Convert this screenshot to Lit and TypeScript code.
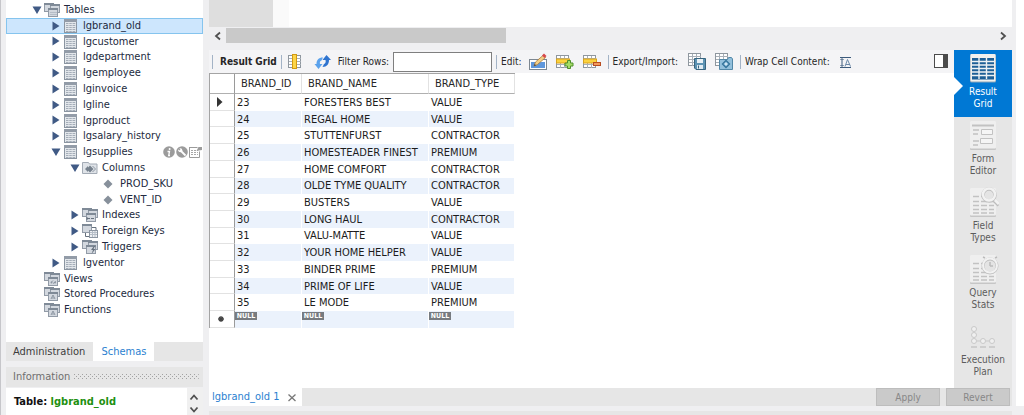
import { LitElement, html, css, svg, nothing, TemplateResult } from "lit";
import { customElement, state } from "lit/decorators.js";
import { classMap } from "lit/directives/class-map.js";

type Kind = "stack" | "views" | "procs" | "table" | "columns" | "column" | "indexes" | "keys" | "triggers";

interface Node {
  label: string;
  level: number;
  kind: Kind;
  open?: boolean;
}

const NODES: Node[] = [
  { label: "Tables", level: 0, kind: "stack", open: true },
  { label: "lgbrand_old", level: 1, kind: "table", open: false },
  { label: "lgcustomer", level: 1, kind: "table", open: false },
  { label: "lgdepartment", level: 1, kind: "table", open: false },
  { label: "lgemployee", level: 1, kind: "table", open: false },
  { label: "lginvoice", level: 1, kind: "table", open: false },
  { label: "lgline", level: 1, kind: "table", open: false },
  { label: "lgproduct", level: 1, kind: "table", open: false },
  { label: "lgsalary_history", level: 1, kind: "table", open: false },
  { label: "lgsupplies", level: 1, kind: "table", open: true },
  { label: "Columns", level: 2, kind: "columns", open: true },
  { label: "PROD_SKU", level: 3, kind: "column" },
  { label: "VENT_ID", level: 3, kind: "column" },
  { label: "Indexes", level: 2, kind: "indexes", open: false },
  { label: "Foreign Keys", level: 2, kind: "keys", open: false },
  { label: "Triggers", level: 2, kind: "triggers", open: false },
  { label: "lgventor", level: 1, kind: "table", open: false },
  { label: "Views", level: 0, kind: "views" },
  { label: "Stored Procedures", level: 0, kind: "procs" },
  { label: "Functions", level: 0, kind: "procs" },
];

const ROWS: [number, string, string][] = [
  [23, "FORESTERS BEST", "VALUE"],
  [24, "REGAL HOME", "VALUE"],
  [25, "STUTTENFURST", "CONTRACTOR"],
  [26, "HOMESTEADER FINEST", "PREMIUM"],
  [27, "HOME COMFORT", "CONTRACTOR"],
  [28, "OLDE TYME QUALITY", "CONTRACTOR"],
  [29, "BUSTERS", "VALUE"],
  [30, "LONG HAUL", "CONTRACTOR"],
  [31, "VALU-MATTE", "VALUE"],
  [32, "YOUR HOME HELPER", "VALUE"],
  [33, "BINDER PRIME", "PREMIUM"],
  [34, "PRIME OF LIFE", "VALUE"],
  [35, "LE MODE", "PREMIUM"],
];

/* ---- tree icons, 16 x 14 ---- */
const sheet = (x: number, y: number) => svg`
  <rect x=${x + 0.5} y=${y + 0.5} width="9" height="8" fill="#d3d8df" stroke="#929ba7"/>
  <rect x=${x} y=${y} width="10" height="2" fill="#7f8a97"/>`;

const badge: Record<string, unknown> = {
  stack: svg`<path d="M6 9.500h7M6 11.500h7" stroke="#b5bdc7"/>`,
  views: svg`<path d="M7.500 10l1.500-1.500M9 11.500l3-2" stroke="#8b95a1"/><circle cx="7.500" cy="10.500" r="1" fill="#8b95a1"/><circle cx="11" cy="10.500" r="1" fill="#8b95a1"/>`,
  procs: svg`<path d="M7 12l2-4 2 4M8 11h2" stroke="#8b95a1" fill="none"/>`,
  indexes: svg`<path d="M5 9v3M5 10.500h8" stroke="#66717e" stroke-dasharray="3 1"/>`,
  triggers: svg`<path d="M12 6l-3 4h2l-1.500 4 4-5h-2l1.500-3z" fill="#66717e"/>`,
};

function treeIcon(kind: Kind): TemplateResult {
  let body: unknown;
  if (kind === "table") {
    body = svg`<rect x="1.500" y=".5" width="12" height="13" fill="#e3e7eb" stroke="#8b95a1"/>
      <rect x="1" y="0" width="13" height="3" fill="#939ca8"/>
      <path d="M3 4.500h10M3 6.500h10M3 8.500h10M3 10.500h10M3 12.500h10" stroke="#a4adb8" stroke-dasharray="2.500 .75"/>`;
  } else if (kind === "columns") {
    body = svg`<path d="M.5 12.500v-11h6l1 1.500h7.500v9.500z" fill="#dfe3e8" stroke="#a3abb5"/>
      <path d="M3 8l3-3v6zM8 4.500l3.500 3.500-3.500 3.500-3.500-3.500z" fill="#76818d"/><path d="M10.500 5l3 3-3 3" stroke="#8b95a1" fill="none"/>`;
  } else if (kind === "column") {
    body = svg`<path d="M8 2.500l4.500 4.500-4.500 4.500-4.500-4.500z" fill="#87909b"/>`;
  } else if (kind === "keys") {
    body = svg`${sheet(0, 0)}<path d="M10 3.500h4v3M3.500 9v3.500h4" stroke="#66717e" fill="none"/>
      <rect x="7.500" y="6.500" width="8" height="7" fill="#eef0f3" stroke="#8b95a1"/><path d="M8 8.500h7M8 10.500h7M10.500 7v6M13 7v6" stroke="#b5bdc7"/>`;
  } else {
    body = svg`${sheet(0, 0)}${sheet(6, 1)}${sheet(4, 5)}${badge[kind]}`;
  }
  return html`<svg class="ticon" width="16" height="14" viewBox="0 0 16 14" aria-hidden="true">${body}</svg>`;
}

/* ---- toolbar icons ---- */
const miniGrid = (x: number, y: number) => svg`
  <rect x=${x + 0.5} y=${y + 0.5} width="12" height="12" fill="#fff" stroke="#8f979f"/>
  <path d="M${x + 1} ${y + 3.5}h12M${x + 1} ${y + 6.5}h12M${x + 1} ${y + 9.5}h12M${x + 4.5} ${y + 1}v12M${x + 8.5} ${y + 1}v12" stroke="#a9b0b8"/>`;

const tool = {
  columns: svg`${miniGrid(2, 2)}<rect x="6.500" y="1.500" width="4" height="14" fill="#fcd54a" stroke="#d39a12"/>`,
  refresh: svg`<path d="M4.500 16l-4-5h2c0-4 2-6.500 6.500-6.500l-1.500 3c-1.500.5-2 1.500-1.500 3.500h2.500z" fill="#5ba2ec"/><path d="M12.500 2l4.500 5h-2c0 4-2 7-6.500 7l1.500-3c1.500-.5 2-2 1.500-4h-3z" fill="#2f74cf"/>`,
  edit: svg`<rect x=".5" y="6.500" width="17" height="10" fill="#fff" stroke="#7d8791"/><path d="M2 9h14v6h-14z" fill="#5f97dc"/>
    <path d="M5 13l1.500-4 8-7 2 2.500-8 7z" fill="#f4cf86" stroke="#a87b3c" stroke-width=".8"/><path d="M13 2.500l2-2 2.500 2.500-2 2z" fill="#d8484c"/><path d="M5 13l.8-2 1.200 1.200z" fill="#333"/>`,
  add: svg`${miniGrid(0, 2)}<rect x=".5" y="6" width="13" height="4" fill="#fbd33f" stroke="#d9a21c"/>
    <path d="M11.500 7.500h3v2.500h2.500v3h-2.500v2.500h-3v-2.500h-2.500v-3h2.500z" fill="#a5dd68" stroke="#4f8f2b"/>`,
  remove: svg`${miniGrid(0, 2)}<rect x=".5" y="6" width="13" height="4" fill="#fbd33f" stroke="#d9a21c"/>
    <rect x="10.500" y="9.500" width="7" height="3" fill="#f39b5e" stroke="#b84d21"/>`,
  save: svg`${miniGrid(0, 0)}<path d="M6.500 5.500h11v11h-9.500l-1.500-1.500z" fill="#5d93b3" stroke="#37647f"/>
    <rect x="9" y="6" width="6" height="4" fill="#e9f1f6"/><rect x="9" y="12" width="6" height="4" fill="#dfeaf1"/><path d="M10.500 12.500v3" stroke="#37647f"/>`,
  load: svg`${miniGrid(0, 0)}<path d="M4.500 16.500v-10h8l1-2h3l1 1.500v10.500z" fill="#93c0dc" stroke="#5288a8"/>
    <path d="M11 7.500l3.500 3.500-3.500 3.500-3.500-3.500z" fill="none" stroke="#33739b" stroke-width="1.300"/><path d="M11 9.500l1.500 1.500-1.500 1.500-1.500-1.500z" fill="#d8ebf6"/>`,
  wrap: svg`<path d="M3 4.500h11M3 14.500h11M5 6v7M3.500 7l1.500-1.500 1.500 1.500M3.500 12l1.500 1.500 1.500-1.500" stroke="#3d5b7c" fill="none"/>
    <path d="M8 13.500l2.500-7 3 7M9 11.500h4" stroke="#6c89a8" fill="none"/>`,
  panel: svg`<rect x="2.500" y="1.500" width="13" height="13" fill="#fff" stroke="#4c4c4c"/><rect x="11" y="1" width="5" height="14" fill="#4c4c4c"/>`,
};

function toolIcon(name: keyof typeof tool): TemplateResult {
  return html`<svg width="18" height="18" viewBox="0 0 18 18" aria-hidden="true">${tool[name]}</svg>`;
}

/* ---- side view icons, 32 x 30 ---- */
const page = svg`<rect x="3" y="1.500" width="26" height="28.500" rx="1" fill="#c6c6c6"/><rect x="3" y="1" width="26" height="27.500" rx="1" fill="#efefef"/>`;
const bars = svg`<path d="M6 9.500h6M14 9.500h6M6 14.500h6M14 14.500h6M22 14.500h5M6 18.500h6M14 18.500h6M22 18.500h5M6 22.500h6M14 22.500h6M22 22.500h5M6 26h6M14 26h6M22 26h5" stroke="#c2c2c2" stroke-width="1.500"/>`;
const VIEWS: { lines: [string, string]; art: unknown }[] = [
  {
    lines: ["Result", "Grid"],
    art: svg`<rect x="3" y="1" width="26" height="28.500" rx="1.500" fill="#8da5b8"/><rect x="3.500" y="1" width="25" height="27.500" rx="1" fill="#f1f1ee"/>
      <rect x="5" y="5" width="22" height="21.500" fill="#1d5f96"/>
      <path d="M5 8.500h22M5 12h22M5 15.500h22M5 19h22M5 22.500h22M12 5v21M19.500 5v21" stroke="#eef2f4" stroke-width="1.400"/>`,
  },
  {
    lines: ["Form", "Editor"],
    art: svg`${page}<path d="M5 5.500h22" stroke="#c2c2c2" stroke-width="2"/><path d="M6 10h6M6 14h5M6 21h6M6 25h5" stroke="#c2c2c2" stroke-width="1.300"/>
      <path d="M14.500 9.500h11v5h-11zM13.500 18.500h12v5h-12z" fill="#f5f5f5" stroke="#c2c2c2"/>`,
  },
  {
    lines: ["Field", "Types"],
    art: svg`${page}${bars}<path d="M26 12l6 6" stroke="#bcbcbc" stroke-width="4"/><path d="M26 11l6 6" stroke="#f2f2f2" stroke-width="3"/>
      <circle cx="22" cy="8" r="6" fill="#e4e4e4" stroke="#c0c0c0" stroke-width="3.500"/><circle cx="22" cy="7.500" r="6" fill="none" stroke="#f2f2f2" stroke-width="2.500"/>`,
  },
  {
    lines: ["Query", "Stats"],
    art: svg`${page}${bars}<circle cx="23" cy="12" r="7" fill="#e4e4e4" stroke="#c0c0c0" stroke-width="3"/><circle cx="23" cy="11.500" r="7" fill="none" stroke="#f2f2f2" stroke-width="2"/>
      <path d="M23 12v-4M23 12h3M16 3l2 1M30 3l-2 1" stroke="#bbb" stroke-width="1.500"/>`,
  },
  {
    lines: ["Execution", "Plan"],
    art: svg`<g stroke="#c9c9c9" fill="#f0f0f0"><circle cx="7" cy="8" r="2.500"/><circle cx="7" cy="14" r="2.500"/><circle cx="7" cy="20" r="2.500"/><circle cx="16" cy="20" r="2.500"/><circle cx="25" cy="20" r="2.500"/>
      <path d="M10 20h3M19 20h3"/></g><path d="M4 26h6M13 26h6M22 26h6" stroke="#c6c6c6" stroke-width="1.500"/>`,
  },
];

@customElement("app-root")
export class AppRoot extends LitElement {
  @state() private selected = "lgbrand_old";
  @state() private view = 0;

  static styles = css`
    :host {
      display: block;
      font: 11px/16px "DejaVu Sans Condensed", "Noto Sans", sans-serif;
      color: #262626;
    }
    * { box-sizing: border-box; }
    button, input { font: inherit; color: inherit; margin: 0; padding: 0; border: 0; background: none; border-radius: 0; }
    svg { display: block; flex: none; }

    .window {
      display: flex;
      min-height: 100vh;
      background: #efeff1;
      border-left: 1px solid #c6c6ca;
    }

    /* navigator */
    .nav { display: flex; flex-direction: column; width: 202px; padding: 0 0 0 5px; flex: none; }
    .tree-pane { flex: 1; background: #fff; }
    .tree {
      display: grid;
      grid-auto-rows: 1fr;
      height: 318px;
      margin: 0;
      padding: 2px 0 0;
      list-style: none;
      color: #222a40;
    }
    .node { display: flex; align-items: center; border: 1px solid transparent; padding-left: 25px; min-height: 0; white-space: nowrap; }
    .node.l1 { padding-left: 44px; }
    .node.l2 { padding-left: 63px; }
    .node.l3 { padding-left: 81px; }
    .node.on { background: #cde6fd; border-color: #85c4ee; }
    .twist { width: 10px; height: 10px; margin-right: 2px; flex: none; }
    .twist svg { width: 10px; height: 10px; }
    .ticon { margin-right: 4px; }
    .hover { display: flex; gap: 1px; margin-left: auto; }

    .tabs { display: flex; height: 19px; background: #e6e6e6; margin-bottom: 6px; gap: 1px; }
    .tabs button { padding: 0 7px; line-height: 18px; color: #3c3c3c; }
    .tabs button.active { background: #fff; color: #2b7fd0; padding: 0 8px; }
    .info-head { display: flex; align-items: center; height: 20px; padding: 0 4px 0 7px; gap: 4px; background: #e6e6e6; color: #6f6f6f; margin-bottom: 1px; }
    .dots { flex: 1; height: 6px; width: 0; }
    .info { display: flex; height: 27px; background: #fff; font-weight: bold; color: #111; }
    .info p { flex: 1; margin: 0; padding: 6px 8px; }
    .info em { font-style: normal; color: #1e9010; }
    .vscroll { display: flex; flex-direction: column; justify-content: space-between; width: 16px; padding: 4px 2px 0; background: #f0f0f0; }

    /* result area */
    .main { flex: 1; min-width: 0; display: flex; flex-direction: column; padding-left: 6px; }
    .editor { display: flex; height: 27px; background: #fff; }
    .gutter { width: 64px; background: #dedede; }
    .fold { width: 16px; background: #fafafa; }
    .hscroll { display: flex; align-items: center; height: 17px; padding: 1px 3px 1px 0; }
    .hscroll .thumb { width: 35%; height: 15px; background: #c9c9c9; margin-right: auto; }
    .hscroll button { width: 17px; display: grid; place-items: center; }
    .hscroll button:last-child { width: 12px; }

    .body { flex: 1; display: flex; margin-top: 6px; min-height: 338px; }
    .result { flex: 1; min-width: 0; background: #fff; }
    .toolbar { display: flex; align-items: center; height: 23px; padding: 0 4px 0 3px; background: #f4f4f6; font-size: 10px; white-space: nowrap; }
    .toolbar .sep { width: 1px; height: 14px; background: #a3b3c6; margin: 0 4px; flex: none; }
    .toolbar .sep.first { margin: 0 7px 0 0; }
    .toolbar input { width: 99px; height: 20px; margin-left: 4px; border: 1px solid #7f7f7f; background: #fff; padding: 0 4px; }
    .tools { display: flex; gap: 9px; margin: 0 3px 0 7px; }
    .tools.wide { margin-left: 10px; }
    .tools.lead { gap: 10px; margin: 0 6px 0 0; }
    .toolbar .panel { margin-left: auto; }

    table { border-collapse: separate; border-spacing: 0; table-layout: fixed; width: 305px; height: 255px; border-top: 1px solid #a4a4a4; border-left: 1px solid #a4a4a4; }
    .c0 { width: 25px; } .c1 { width: 67px; } .c2 { width: 127px; } .c3 { width: 86px; }
    th, td { height: 16px; padding: 0 2px; text-align: left; font-weight: normal; line-height: 15px; white-space: nowrap; overflow: hidden; }
    td { border-right: 1px solid #fff; color: #1c1c1c; }
    thead th { height: 20px; padding-left: 6px; border-bottom: 1px solid #b0b0b0; border-right: 1px solid #e2e2e2; }
    tbody th { padding: 0; border-bottom: 1px solid #e2e2e2; }
    tr > :first-child { border-right: 1px solid #9a9a9a; }
    tbody tr:nth-child(even) td { background: #ebf2fc; }
    .mark { margin-left: 7px; }
    tr.new td { vertical-align: top; padding-left: 0; }
    .null { display: block; width: 22px; margin-top: 1px; background: #777b80; color: #fff; font-size: 7px; line-height: 8px; font-weight: bold; text-align: center; }

    .views { width: 58px; background: #e6e6e6; }
    .views button { display: flex; flex-direction: column; align-items: center; gap: 4px; width: 100%; height: 67px; padding-top: 3px; font-size: 10px; line-height: 11px; color: #5c5c5c; position: relative; }
    .views button.active { background: #0078d4; color: #fff; }
    .views button.active::before { content: ""; position: absolute; left: 0; top: 27px; border: 9px solid transparent; border-left-color: #fff; border-right: 0; }
    .views span { display: block; line-height: 12px; margin-top: -1px; }

    .bottom { display: flex; justify-content: flex-end; gap: 6px; height: 18px; padding-right: 2px; background: #e6e6e6; }
    .filetab { display: flex; align-items: center; gap: 8px; padding: 0 5px 0 3px; background: #fff; color: #2b7fd0; margin-right: auto; }
    .filetab button { height: 18px; display: grid; place-items: center; }
    .action { width: 64px; border: 1px solid #bdbdbd; background: #cacaca; color: #878787; line-height: 15px; font-size: 10px; }
    .status { height: 4px; margin-top: 5px; background: #e6e6e6; }
    .edge { width: 12px; padding: 0 0 9px 4px; flex: none; }
    .edge div { height: 100%; background: #fff; }
  `;

  private twist(open: boolean) {
    return html`<button class="twist" aria-label=${open ? "Collapse" : "Expand"}>
      <svg viewBox="0 0 10 10"><path d=${open ? "M.5 1.500h9l-4.500 7.500z" : "M1.500 .5l7 4.500-7 4.500z"} fill="#405a85" /></svg>
    </button>`;
  }

  private node(n: Node) {
    const cls = { node: true, ["l" + n.level]: true, on: n.label === this.selected };
    return html`<li class=${classMap(cls)} @click=${() => (this.selected = n.label)}>
      ${n.open === undefined ? html`<span class="twist"></span>` : this.twist(n.open)}
      ${treeIcon(n.kind)}<span>${n.label}</span>
      ${n.label === "lgsupplies"
        ? html`<span class="hover">
            <svg width="12" height="12" viewBox="0 0 12 12"><circle cx="6" cy="6" r="5.800" fill="#9b9b9b" /><circle cx="6.600" cy="3" r="1" fill="#fff" /><path d="M4.500 5.500h2l-.8 4h1.300" fill="none" stroke="#fff" stroke-width="1.300" /></svg>
            <svg width="12" height="12" viewBox="0 0 12 12"><circle cx="6" cy="6" r="5.800" fill="#9b9b9b" /><path d="M5 5l4.500 4.500" stroke="#fff" stroke-width="1.800" /><circle cx="4.300" cy="4.300" r="2" fill="#fff" /><path d="M2 2l2 2" stroke="#9b9b9b" stroke-width="1.300" /></svg>
            <svg width="13" height="12" viewBox="0 0 13 12"><path d="M.5 1.500h8M.5 1v10.500h10v-6" fill="none" stroke="#9b9b9b" /><path d="M2 4.500h7M2 6.500h7M2 8.500h7" stroke="#a8a8a8" stroke-dasharray="2 1" /><path d="M7.500 5l2-4h3.500v3l-3 .5z" fill="#9b9b9b" /></svg>
          </span>`
        : nothing}
    </li>`;
  }

  private chevron(d: string) {
    return html`<svg width="10" height="10" viewBox="0 0 10 10" aria-hidden="true"><path d=${d} fill="none" stroke="#505050" stroke-width="1.800" /></svg>`;
  }

  render() {
    return html`<div class="window">
      <aside class="nav">
        <div class="tree-pane"><ul class="tree">${NODES.map((n) => this.node(n))}</ul></div>
        <div class="tabs"><button>Administration</button><button class="active">Schemas</button></div>
        <div class="info-head">
          Information
          <svg class="dots" aria-hidden="true">
            <pattern id="grip" width="4" height="4" patternUnits="userSpaceOnUse"><path d="M0 0h1v1h-1zM2 2h1v1h-1z" fill="#a2a2a2" /></pattern>
            <rect width="100%" height="100%" fill="url(#grip)" />
          </svg>
        </div>
        <div class="info">
          <p>Table: <em>${this.selected}</em></p>
          <div class="vscroll">${this.chevron("M1.500 7.500l3.500-4 3.500 4")}${this.chevron("M1.500 2.500l3.500 4 3.500-4")}</div>
        </div>
      </aside>

      <main class="main">
        <div class="editor"><div class="gutter"></div><div class="fold"></div></div>
        <div class="hscroll">
          <button aria-label="Scroll left">${this.chevron("M7 1.500l-4 3.500 4 3.500")}</button>
          <div class="thumb"></div>
          <button aria-label="Scroll right">${this.chevron("M3 1.500l4 3.500-4 3.500")}</button>
        </div>
        <div class="body">
          <section class="result">
            <div class="toolbar">
              <span class="sep first"></span><b>Result Grid</b><span class="sep"></span>
              <div class="tools lead"><button aria-label="Columns">${toolIcon("columns")}</button><button aria-label="Refresh">${toolIcon("refresh")}</button></div>
              <label for="filter">Filter Rows:</label><input id="filter" type="text" />
              <span class="sep"></span><span>Edit:</span>
              <div class="tools"><button aria-label="Edit row">${toolIcon("edit")}</button><button aria-label="Add row">${toolIcon("add")}</button><button aria-label="Delete row">${toolIcon("remove")}</button></div>
              <span class="sep"></span><span>Export/Import:</span>
              <div class="tools wide"><button aria-label="Export">${toolIcon("save")}</button><button aria-label="Import">${toolIcon("load")}</button></div>
              <span class="sep"></span><span>Wrap Cell Content:</span>
              <div class="tools"><button aria-label="Wrap cell content">${toolIcon("wrap")}</button></div>
              <button class="panel" aria-label="Toggle side panel">${toolIcon("panel")}</button>
            </div>
            <table>
              <colgroup><col class="c0" /><col class="c1" /><col class="c2" /><col class="c3" /></colgroup>
              <thead><tr><th></th><th scope="col">BRAND_ID</th><th scope="col">BRAND_NAME</th><th scope="col">BRAND_TYPE</th></tr></thead>
              <tbody>
                ${ROWS.map(
                  (r, i) => html`<tr>
                    <th>${i === 0 ? html`<svg class="mark" width="6" height="10" viewBox="0 0 6 10"><path d="M0 0l5.500 5-5.500 5z" fill="#333" /></svg>` : nothing}</th>
                    ${r.map((c) => html`<td>${c}</td>`)}
                  </tr>`
                )}
                <tr class="new">
                  <th><svg class="mark" width="8" height="8" viewBox="0 0 8 8"><path d="M4 1v6M1 4h6M2 2l4 4M6 2l-4 4" stroke="#444" stroke-width="1.300" /></svg></th>
                  ${[0, 1, 2].map(() => html`<td><span class="null">NULL</span></td>`)}
                </tr>
              </tbody>
            </table>
          </section>
          <nav class="views">
            ${VIEWS.map(
              (v, i) => html`<button class=${classMap({ active: i === this.view })} @click=${() => (this.view = i)}>
                <svg width="32" height="30" viewBox="0 0 32 30" aria-hidden="true">${v.art}</svg>
                <span>${v.lines[0]}<br />${v.lines[1]}</span>
              </button>`
            )}
          </nav>
        </div>
        <div class="bottom">
          <div class="filetab"><span>lgbrand_old 1</span><button aria-label="Close"><svg width="10" height="10" viewBox="0 0 10 10"><path d="M1.500 2.500l7 6.500M8.500 2.500l-7 6.500" stroke="#777" stroke-width="1.300" /></svg></button></div>
          <button class="action" disabled>Apply</button><button class="action" disabled>Revert</button>
        </div>
        <div class="status"></div>
      </main>
      <div class="edge"><div></div></div>
    </div>`;
  }
}
